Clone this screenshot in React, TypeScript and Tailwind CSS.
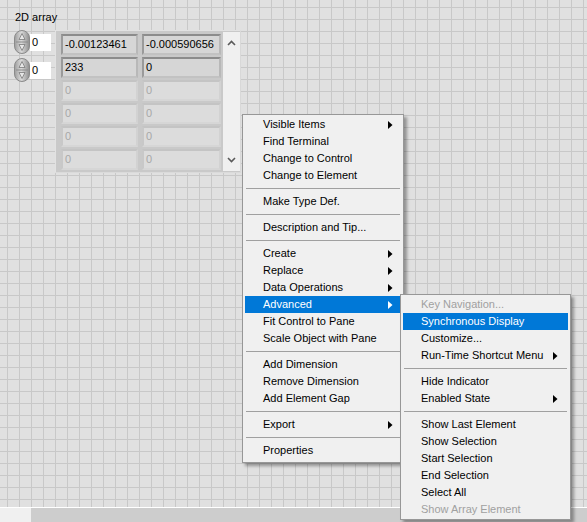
import React from "react";

type Item =
  | { kind: "sep" }
  | { kind: "item"; label: string; arrow?: boolean; hi?: boolean; disabled?: boolean };

const mainMenu: Item[] = [
  { kind: "item", label: "Visible Items", arrow: true },
  { kind: "item", label: "Find Terminal" },
  { kind: "item", label: "Change to Control" },
  { kind: "item", label: "Change to Element" },
  { kind: "sep" },
  { kind: "item", label: "Make Type Def." },
  { kind: "sep" },
  { kind: "item", label: "Description and Tip..." },
  { kind: "sep" },
  { kind: "item", label: "Create", arrow: true },
  { kind: "item", label: "Replace", arrow: true },
  { kind: "item", label: "Data Operations", arrow: true },
  { kind: "item", label: "Advanced", arrow: true, hi: true },
  { kind: "item", label: "Fit Control to Pane" },
  { kind: "item", label: "Scale Object with Pane" },
  { kind: "sep" },
  { kind: "item", label: "Add Dimension" },
  { kind: "item", label: "Remove Dimension" },
  { kind: "item", label: "Add Element Gap" },
  { kind: "sep" },
  { kind: "item", label: "Export", arrow: true },
  { kind: "sep" },
  { kind: "item", label: "Properties" },
];

const subMenu: Item[] = [
  { kind: "item", label: "Key Navigation...", disabled: true },
  { kind: "item", label: "Synchronous Display", hi: true },
  { kind: "item", label: "Customize..." },
  { kind: "item", label: "Run-Time Shortcut Menu", arrow: true },
  { kind: "sep" },
  { kind: "item", label: "Hide Indicator" },
  { kind: "item", label: "Enabled State", arrow: true },
  { kind: "sep" },
  { kind: "item", label: "Show Last Element" },
  { kind: "item", label: "Show Selection" },
  { kind: "item", label: "Start Selection" },
  { kind: "item", label: "End Selection" },
  { kind: "item", label: "Select All" },
  { kind: "item", label: "Show Array Element", disabled: true },
];

function Arrow({ white }: { white?: boolean }) {
  return (
    <svg width="5" height="8" viewBox="0 0 5 8" className="shrink-0">
      <path d="M0 0 L4.5 4 L0 8 Z" fill={white ? "#ffffff" : "#000000"} />
    </svg>
  );
}

function MenuList({ items, arrowPad }: { items: Item[]; arrowPad: string }) {
  return (
    <>
      {items.map((it, i) =>
        it.kind === "sep" ? (
          <div key={i} className="h-[9px] flex items-center px-[1px]">
            <div className="h-px w-full bg-[#a0a0a0]" />
          </div>
        ) : (
          <div
            key={i}
            className={
              "h-[17px] flex items-center justify-between pl-[18px] " +
              arrowPad +
              (it.hi ? " bg-[#0078d7] text-white" : it.disabled ? " text-[#a0a0a0]" : " text-black")
            }
          >
            <span className="leading-[17px] whitespace-nowrap">{it.label}</span>
            {it.arrow ? <Arrow white={it.hi} /> : null}
          </div>
        )
      )}
    </>
  );
}

function Spinner({ id }: { id: string }) {
  return (
    <svg width="16" height="24" viewBox="0 0 16 24" className="shrink-0">
      <defs>
        <linearGradient id={id} x1="0" x2="1" y1="0" y2="0">
          <stop offset="0" stopColor="#9c9c9c" />
          <stop offset="0.45" stopColor="#dadada" />
          <stop offset="1" stopColor="#8e8e8e" />
        </linearGradient>
      </defs>
      <rect x="0.5" y="0.5" width="15" height="23" rx="7.5" fill={`url(#${id})`} stroke="#8a8a8a" />
      <line x1="2" y1="12" x2="14" y2="12" stroke="#8c8c8c" />
      <path d="M8 3.5 L11 9.5 L5 9.5 Z" fill="#e6e6e6" stroke="#7a7a7a" strokeWidth="0.8" />
      <path d="M8 20.5 L11 14.5 L5 14.5 Z" fill="#e6e6e6" stroke="#7a7a7a" strokeWidth="0.8" />
    </svg>
  );
}

function Cell({ v, active }: { v: string; active: boolean }) {
  return active ? (
    <div className="h-[21px] flex items-center pl-[2px] bg-[#d6d6d6] border-2 border-t-[#8c8c8c] border-l-[#9a9a9a] border-r-[#b8b8b8] border-b-[#c2c2c2] text-black">
      {v}
    </div>
  ) : (
    <div className="h-[21px] flex items-center pl-[2px] bg-[#dcdcdc] border-2 border-t-[#c4c4c4] border-l-[#c8c8c8] border-r-[#d2d2d2] border-b-[#d6d6d6] text-[#a8a8a8]">
      {v}
    </div>
  );
}

export default function App() {
  const rows: [string, string, boolean][] = [
    ["-0.00123461", "-0.000590656", true],
    ["233", "0", true],
    ["0", "0", false],
    ["0", "0", false],
    ["0", "0", false],
    ["0", "0", false],
  ];
  return (
    <div className="relative w-[587px] h-[522px] flex flex-col overflow-hidden font-['Liberation_Sans',Arial,sans-serif] text-[11px] select-none">
      <div className="relative h-[507px] bg-[#e0e0e0] [background-image:linear-gradient(to_right,#c8c8c8_1px,transparent_1px),linear-gradient(to_bottom,#c8c8c8_1px,transparent_1px)] [background-size:12px_12px] [background-position:7px_7px]">
        {/* 2D array control */}
        <div className="absolute left-[14px] top-[11px] flex flex-col">
          <div className="pl-[1px] leading-[13px] text-black">2D array</div>
          <div className="flex mt-[6px]">
            <div className="w-[41px] flex flex-col gap-[4px] pt-[0px]">
              <div className="flex items-center h-[24px]">
                <Spinner id="sg1" />
                <div className="w-[21px] h-[17px] bg-white pl-[2px] leading-[17px] text-black">0</div>
              </div>
              <div className="flex items-center h-[24px]">
                <Spinner id="sg2" />
                <div className="w-[21px] h-[17px] bg-white pl-[2px] leading-[17px] text-black">0</div>
              </div>
            </div>
            <div className="flex w-[186px] h-[143px] bg-[#c9c9c9] border border-t-[#e2e2e2] border-l-[#e2e2e2] border-r-[#d8d8d8] border-b-[#dadada]">
              <div className="pl-[5px] pt-[3px]">
                <div className="grid grid-cols-[77px_79px] gap-x-[4px] gap-y-[2px]">
                  {rows.map((r, i) => (
                    <React.Fragment key={i}>
                      <Cell v={r[0]} active={r[2]} />
                      <Cell v={r[1]} active={r[2]} />
                    </React.Fragment>
                  ))}
                </div>
              </div>
              <div className="ml-[2px] mt-[1px] w-[17px] h-[139px] bg-[#f0f0f0] flex flex-col items-center justify-between py-[8px]">
                <svg width="9" height="6" viewBox="0 0 9 6">
                  <path d="M1 5 L4.5 1.5 L8 5" fill="none" stroke="#5a5a5a" strokeWidth="1.6" />
                </svg>
                <svg width="9" height="6" viewBox="0 0 9 6">
                  <path d="M1 1 L4.5 4.5 L8 1" fill="none" stroke="#5a5a5a" strokeWidth="1.6" />
                </svg>
              </div>
            </div>
          </div>
        </div>
      </div>

      {/* horizontal scroll bar */}
      <div className="h-[15px] flex border-t border-white">
        <div className="w-[31px] bg-[#f0f0f0]" />
        <div className="flex-1 bg-[#cdcdcd]" />
      </div>

      {/* context menu */}
      <div className="absolute left-[242px] top-[114px] w-[162px] bg-[#f0f0f0] border border-[#979797] pt-[1px] pb-[3px] px-[2px] shadow-[3px_3px_3px_rgba(0,0,0,0.35)]">
        <MenuList items={mainMenu} arrowPad="pr-[8px]" />
      </div>

      {/* submenu */}
      <div className="absolute left-[400px] top-[294px] w-[171px] bg-[#f0f0f0] border border-[#979797] pt-[1px] pb-[1px] px-[2px] shadow-[3px_3px_3px_rgba(0,0,0,0.35)]">
        <MenuList items={subMenu} arrowPad="pr-[10px]" />
      </div>
    </div>
  );
}
